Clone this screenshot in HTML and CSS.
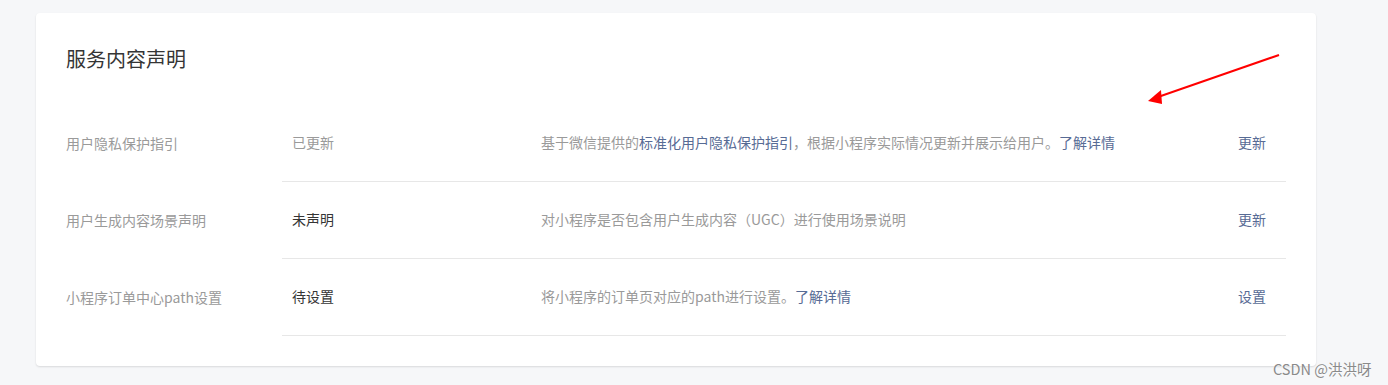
FILE: index.html
```html
<!DOCTYPE html>
<html lang="zh-CN">
<head>
  <meta charset="UTF-8">
  <title>服务内容声明</title>
  <link rel="stylesheet" href="styles.css">
</head>
<body>
  <div class="card">
    <h2 class="card-title">服务内容声明</h2>

    <div class="decl-list">
      <div class="decl-row">
        <div class="decl-label">用户隐私保护指引</div>
        <div class="decl-body">
          <div class="decl-status">已更新</div>
          <div class="decl-desc">基于微信提供的<a class="link">标准化用户隐私保护指引</a>，根据小程序实际情况更新并展示给用户。<a class="link">了解详情</a></div>
          <div class="decl-action"><a class="link">更新</a></div>
        </div>
      </div>
      <div class="decl-row">
        <div class="decl-label">用户生成内容场景声明</div>
        <div class="decl-body">
          <div class="decl-status todo">未声明</div>
          <div class="decl-desc">对小程序是否包含用户生成内容（UGC）进行使用场景说明</div>
          <div class="decl-action"><a class="link">更新</a></div>
        </div>
      </div>
      <div class="decl-row">
        <div class="decl-label">小程序订单中心path设置</div>
        <div class="decl-body">
          <div class="decl-status todo">待设置</div>
          <div class="decl-desc">将小程序的订单页对应的path进行设置。<a class="link">了解详情</a></div>
          <div class="decl-action"><a class="link">设置</a></div>
        </div>
      </div>
    </div>
  </div>

  <!-- annotation arrow -->
  <svg class="arrow" width="1388" height="385" viewBox="0 0 1388 385">
    <line x1="1279" y1="55" x2="1158" y2="97" stroke="#ff0000" stroke-width="2"/>
    <polygon points="1148,101 1161,90 1162,104" fill="#ff0000"/>
  </svg>

  <div class="watermark">CSDN @洪洪呀</div>
</body>
</html>
```

FILE: styles.css
```css
body {
  margin: 0;
  background: #f6f7f9;
  font-family: "Noto Sans CJK SC", "Noto Sans", sans-serif;
  color: #353535;
  height: 385px;
  overflow: hidden;
}
.card {
  width: 1280px;
  margin: 13px 0 0 36px;
  padding: 32px 30px 30px;
  box-sizing: border-box;
  background: #fff;
  border-radius: 4px;
  box-shadow: 0 1px 2px rgba(0, 0, 0, 0.12);
}
.card-title {
  margin: 0 0 32px;
  font-size: 20px;
  font-weight: normal;
  line-height: 28px;
  color: #353535;
}
.decl-row {
  display: grid;
  grid-template-columns: 216px 1fr;
  align-items: center;
  font-size: 14px;
}
.decl-label {
  padding-bottom: 2px;
  color: #9a9a9a;
}
.decl-body {
  display: grid;
  grid-template-columns: 249px 1fr auto;
  align-items: center;
  box-sizing: border-box;
  height: 77px;
  padding-bottom: 2px;
  border-bottom: 1px solid #e7e7e7;
}
.decl-status {
  padding-left: 10px;
  color: #9a9a9a;
}
.decl-status.todo {
  color: #353535;
}
.decl-desc {
  padding-left: 10px;
  color: #9a9a9a;
}
.decl-action {
  padding-right: 20px;
}
.link {
  color: #576b95;
  text-decoration: none;
  cursor: pointer;
}
.arrow {
  position: absolute;
  left: 0;
  top: 0;
  pointer-events: none;
}
.watermark {
  position: absolute;
  left: 1273px;
  top: 358px;
  font-size: 14.5px;
  color: #8a8a8a;
  font-family: "Noto Sans CJK SC", "Liberation Sans", sans-serif;
  text-shadow: 0 0 2px #fff;
}
```
